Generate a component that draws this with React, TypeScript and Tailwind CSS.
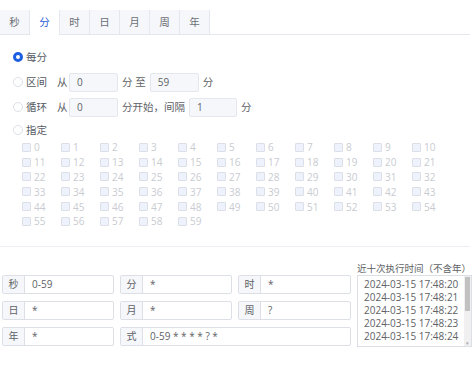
import React from "react";

const tabs = ["秒", "分", "时", "日", "月", "周", "年"];
const times = [
  "2024-03-15 17:48:20",
  "2024-03-15 17:48:21",
  "2024-03-15 17:48:22",
  "2024-03-15 17:48:23",
  "2024-03-15 17:48:24",
];

function Radio({ checked, label }: { checked?: boolean; label: string }) {
  return (
    <div className="flex items-center w-[43px] shrink-0">
      <span
        className={
          checked
            ? "w-[10px] h-[10px] rounded-full border-[3px] border-[#1d5ee0] bg-white"
            : "w-[10px] h-[10px] rounded-full border border-[#dcdfe6] bg-white"
        }
      />
      <span className="ml-[3px] text-[#555a63]">{label}</span>
    </div>
  );
}

function Box({ value, w }: { value: string; w: string }) {
  return (
    <div className={`${w} h-[19px] bg-[#f5f7fa] border border-[#e4e7ed] rounded-[2px] flex items-center pl-[7px] text-[#606266] text-[10px]`}>
      {value}
    </div>
  );
}

function Field({ label, value, wide }: { label: string; value: string; wide?: boolean }) {
  return (
    <div className={`${wide ? "col-span-2" : ""} flex h-[19px] border border-[#dcdfe6] rounded-[2px] bg-white`}>
      <div className="w-[22px] shrink-0 bg-[#f5f7fa] border-r border-[#dcdfe6] flex items-center justify-center text-[#606266] text-[10px]">
        {label}
      </div>
      <div className="flex-1 flex items-center pl-[7px] text-[#606266] text-[10px]">{value}</div>
    </div>
  );
}

export default function App() {
  return (
    <div
      className="w-[474px] h-[380px] bg-white overflow-hidden text-[10.5px] leading-none"
      style={{ fontFamily: '"Open Sans", "Noto Sans CJK SC", sans-serif' }}
    >
      {/* tab bar */}
      <div className="pt-[10px] pr-[4px]">
        <div className="flex h-[25px] border-b border-[#e4e7ed]">
          {tabs.map((t, i) => (
            <div
              key={t}
              className={
                i === 1
                  ? "w-[30px] h-[25px] bg-white border-r border-[#e4e7ed] flex items-center justify-center text-[#2a5bd7] -mb-px"
                  : "w-[30px] h-[24px] bg-[#f5f7fa] border-r border-[#e4e7ed] flex items-center justify-center text-[#6b6f76]"
              }
            >
              {t}
            </div>
          ))}
        </div>
      </div>

      {/* options */}
      <div className="pl-[13px] pt-[12px]">
        <div className="flex items-center h-[20px]">
          <Radio checked label="每分" />
        </div>
        <div className="flex items-center h-[20px] mt-[5px]">
          <Radio label="区间" />
          <span className="ml-[1px] w-[12px] text-[#606266]">从</span>
          <Box value="0" w="w-[49px]" />
          <span className="ml-[4px] mr-[4px] text-[#606266]">分 至</span>
          <Box value="59" w="w-[49px]" />
          <span className="ml-[4px] text-[#606266]">分</span>
        </div>
        <div className="flex items-center h-[20px] mt-[5px]">
          <Radio label="循环" />
          <span className="ml-[1px] w-[12px] text-[#606266]">从</span>
          <Box value="0" w="w-[49px]" />
          <span className="ml-[4px] mr-[4px] text-[#606266]">分开始，间隔</span>
          <Box value="1" w="w-[48px]" />
          <span className="ml-[4px] text-[#606266]">分</span>
        </div>
        <div className="flex items-center h-[20px] mt-[3px]">
          <Radio label="指定" />
        </div>
        <div className="grid grid-cols-[repeat(11,39px)] auto-rows-[14.8px] pl-[9px]">
          {Array.from({ length: 60 }, (_, n) => (
            <div key={n} className="flex items-center">
              <span className="w-[9px] h-[9px] bg-[#edf2fc] border border-[#dcdfe6] rounded-[1px]" />
              <span className="ml-[3px] text-[10px] text-[#c8cbd1]">{n}</span>
            </div>
          ))}
        </div>
      </div>

      {/* divider */}
      <div className="mt-[17px] mr-[4px] border-t border-[#ebeef5]" />

      {/* result area */}
      <div className="flex pl-[2px] mt-[15px]">
        <div className="w-[349px] pt-[13px] grid grid-cols-[112px_112px_113px] gap-x-[6px] gap-y-[7px] auto-rows-[19px]">
          <Field label="秒" value="0-59" />
          <Field label="分" value="*" />
          <Field label="时" value="*" />
          <Field label="日" value="*" />
          <Field label="月" value="*" />
          <Field label="周" value="?" />
          <Field label="年" value="*" />
          <Field label="式" value="0-59 * * * * ? *" wide />
        </div>
        <div className="ml-[6px] w-[115px]">
          <div className="h-[13px] flex items-center text-[9.5px] text-[#606266] whitespace-nowrap">
            近十次执行时间（不含年）
          </div>
          <div className="flex h-[72px] border border-[#dcdfe6] bg-white">
            <div className="flex-1 pl-[6px] pt-[2px] text-[10px] text-[#606266] leading-[13px]">
              {times.map((t) => (
                <div key={t} className="h-[13px] whitespace-nowrap">{t}</div>
              ))}
            </div>
            <div className="w-[7px] flex flex-col bg-[#f0f0f0]">
              <div className="h-[34px] mt-[1px] mx-[1px] bg-[#c1c1c1]" />
              <div className="flex-1" />
              <div className="h-[5px] text-[5px] leading-[5px] text-[#a3a3a3] text-center">▾</div>
            </div>
          </div>
        </div>
      </div>
    </div>
  );
}
